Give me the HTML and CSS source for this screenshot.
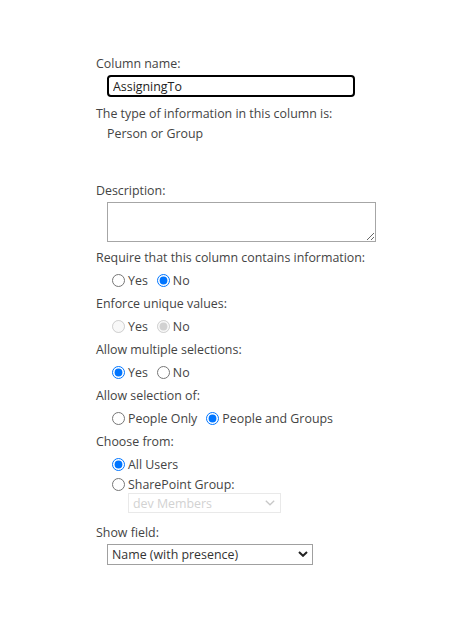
FILE: index.html
```html
<!DOCTYPE html>
<html lang="en">
<head>
<meta charset="utf-8">
<title>Column settings</title>
<link rel="stylesheet" href="styles.css">
</head>
<body>
<div class="form">
  <div class="label label-first">Column name:</div>
  <div class="field"><input class="name-input" type="text" value="AssigningTo"></div>
  <div class="label label-type">The type of information in this column is:</div>
  <div class="type-value">Person or Group</div>
  <div class="label label-desc">Description:</div>
  <div class="field"><textarea class="desc-area"></textarea></div>

  <div class="label label-req">Require that this column contains information:</div>
  <div class="radio-row">
    <label class="opt"><input type="radio" name="req">Yes</label>
    <label class="opt"><input type="radio" name="req" checked>No</label>
  </div>

  <div class="label">Enforce unique values:</div>
  <div class="radio-row disabled">
    <label class="opt"><input type="radio" name="uniq" disabled>Yes</label>
    <label class="opt"><input type="radio" name="uniq" checked disabled>No</label>
  </div>

  <div class="label">Allow multiple selections:</div>
  <div class="radio-row">
    <label class="opt"><input type="radio" name="multi" checked>Yes</label>
    <label class="opt"><input type="radio" name="multi">No</label>
  </div>

  <div class="label">Allow selection of:</div>
  <div class="radio-row">
    <label class="opt"><input type="radio" name="sel">People Only</label>
    <label class="opt"><input type="radio" name="sel" checked>People and Groups</label>
  </div>

  <div class="label">Choose from:</div>
  <div class="radio-row row-all">
    <label class="opt"><input type="radio" name="from" checked>All Users</label>
  </div>
  <div class="radio-row row-sp">
    <label class="opt"><input type="radio" name="from">SharePoint Group:</label>
  </div>
  <div class="group-field">
    <div class="select-wrap">
      <select class="group-select" disabled><option>dev Members</option></select>
      <svg class="chev chev-disabled" width="10" height="6" viewBox="0 0 10 6"><path d="M0.8 0.8 L5 4.8 L9.2 0.8" fill="none" stroke="#c8c8c8" stroke-width="1.3"/></svg>
    </div>
  </div>

  <div class="label label-show">Show field:</div>
  <div class="field">
    <div class="select-wrap">
      <select class="show-select"><option>Name (with presence)</option></select>
      <svg class="chev chev-show" width="10" height="6" viewBox="0 0 10 6"><path d="M1 1 L5 4.8 L9 1" fill="none" stroke="#222" stroke-width="2"/></svg>
    </div>
  </div>
</div>
</body>
</html>
```

FILE: styles.css
```css
html, body {
  margin: 0;
  background: #fff;
}

body {
  font-family: "Open Sans", "Noto Sans", sans-serif;
  font-size: 12.4px;
  color: #444;
}

.form {
  padding: 53px 0 40px 96px;
}

.label {
  line-height: 23px;
  height: 23px;
  white-space: nowrap;
}

.label-first {
  line-height: 22px;
  height: 22px;
}

.field {
  padding-left: 11px;
}

.name-input {
  display: block;
  box-sizing: border-box;
  width: 248px;
  height: 22px;
  margin: 0;
  border: 2px solid #000;
  border-radius: 4px;
  padding: 0 4px;
  font: inherit;
  color: #222;
  outline: none;
  background: #fff;
}

.label-type {
  margin-top: 8px;
  line-height: 18px;
  height: 18px;
}

.type-value {
  margin-top: 2px;
  line-height: 18px;
  padding-left: 11px;
}

.label-desc {
  margin-top: 36px;
}

.desc-area {
  display: block;
  box-sizing: border-box;
  width: 269px;
  height: 40px;
  margin: 0;
  border: 1px solid #a6a6a6;
  border-radius: 0;
  font: inherit;
  outline: none;
}

.label-req {
  margin-top: 4px;
}

.radio-row {
  display: flex;
  align-items: center;
  height: 23px;
  padding-left: 11px;
  gap: 4px;
  white-space: nowrap;
}

.opt {
  display: flex;
  align-items: center;
}

.opt input {
  margin: 0 3px 0 5px;
  width: 13px;
  height: 13px;
}

.row-all {
  height: 22px;
}

.row-sp {
  height: 18px;
}

.group-field {
  padding-left: 32px;
}

.select-wrap {
  position: relative;
  display: inline-block;
  vertical-align: top;
}

.group-select,
.show-select {
  display: block;
  box-sizing: border-box;
  appearance: none;
  -webkit-appearance: none;
  margin: 0;
  border-radius: 0;
  font: inherit;
  outline: none;
  padding: 0 0 0 4px;
}

.group-select {
  width: 153px;
  height: 20px;
  border: 1px solid #e0e0e0;
  background: #fff;
  color: #c0c0c0;
}

.show-select {
  width: 206px;
  height: 21px;
  border: 1px solid #a0a0a0;
  background: #fff;
  color: #333;
}

.chev {
  position: absolute;
  pointer-events: none;
}

.chev-disabled {
  right: 6px;
  top: 7px;
}

.chev-show {
  right: 5px;
  top: 7px;
}

.label-show {
  margin-top: 8px;
}
```
